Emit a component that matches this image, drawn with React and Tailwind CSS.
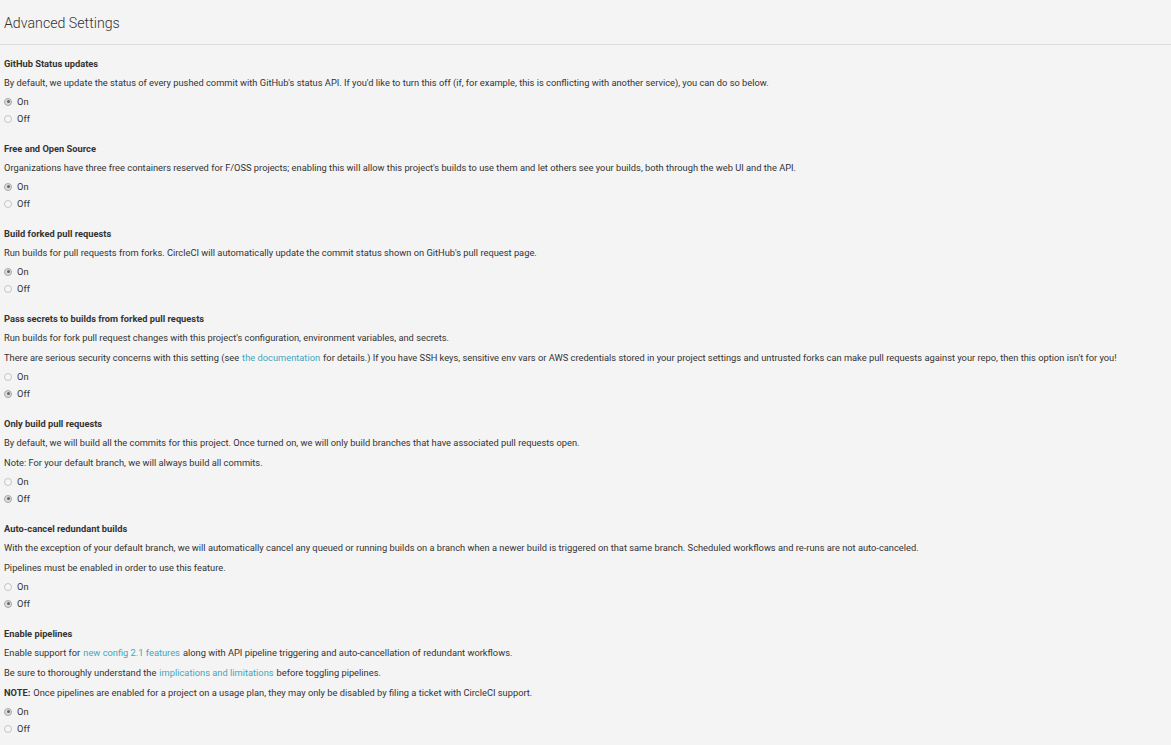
import React from "react";

function Radio({ checked, label }) {
  return (
    <label className="flex items-center h-[17px] gap-[5px]">
      <span
        className={
          checked
            ? "w-[8px] h-[8px] rounded-full border border-[#a8a8a8] bg-[#dcdcdc] flex items-center justify-center shrink-0"
            : "w-[8px] h-[8px] rounded-full border border-[#c4c4c4] bg-[#f6f6f6] flex items-center justify-center shrink-0"
        }
      >
        {checked && <span className="w-[3px] h-[3px] rounded-full bg-[#666]" />}
      </span>
      <span>{label}</span>
    </label>
  );
}

function Section({ title, children, on }) {
  return (
    <div className="mb-[12px]">
      <div className="font-bold h-[19px] flex items-center">{title}</div>
      {children}
      <div className="flex flex-col">
        <Radio checked={on} label="On" />
        <Radio checked={!on} label="Off" />
      </div>
    </div>
  );
}

function P({ children }) {
  return <p className="h-[20px] flex items-center whitespace-nowrap">{children}</p>;
}

function A({ children }) {
  return <a className="text-[#3fa7bd] mx-[3px]">{children}</a>;
}

export default function App() {
  return (
    <div
      className="min-h-[745px] bg-[#f4f4f4] text-[#333] text-[9.3px]"
      style={{ fontFamily: "Roboto, 'Liberation Sans', sans-serif" }}
    >
      <div className="h-[45px] flex items-center px-[4px] pt-[3px] border-b border-[#dedede]">
        <h1 className="text-[14.2px] font-light text-[#333]">Advanced Settings</h1>
      </div>
      <div className="px-[4px] pt-[9px]">
        <Section title="GitHub Status updates" on>
          <P>
            By default, we update the status of every pushed commit with GitHub's status API. If you'd like to turn this off (if, for example, this is conflicting with another service), you can do so below.
          </P>
        </Section>
        <Section title="Free and Open Source" on>
          <P>
            Organizations have three free containers reserved for F/OSS projects; enabling this will allow this project's builds to use them and let others see your builds, both through the web UI and the API.
          </P>
        </Section>
        <Section title="Build forked pull requests" on>
          <P>
            Run builds for pull requests from forks. CircleCI will automatically update the commit status shown on GitHub's pull request page.
          </P>
        </Section>
        <Section title="Pass secrets to builds from forked pull requests" on={false}>
          <P>Run builds for fork pull request changes with this project's configuration, environment variables, and secrets.</P>
          <P>
            There are serious security concerns with this setting (see<A>the documentation</A>for details.) If you have SSH keys, sensitive env vars or AWS credentials stored in your project settings and untrusted forks can make pull requests against your repo, then this option isn't for you!
          </P>
        </Section>
        <Section title="Only build pull requests" on={false}>
          <P>By default, we will build all the commits for this project. Once turned on, we will only build branches that have associated pull requests open.</P>
          <P>Note: For your default branch, we will always build all commits.</P>
        </Section>
        <Section title="Auto-cancel redundant builds" on={false}>
          <P>
            With the exception of your default branch, we will automatically cancel any queued or running builds on a branch when a newer build is triggered on that same branch. Scheduled workflows and re-runs are not auto-canceled.
          </P>
          <P>Pipelines must be enabled in order to use this feature.</P>
        </Section>
        <Section title="Enable pipelines" on>
          <P>
            Enable support for<A>new config 2.1 features</A>along with API pipeline triggering and auto-cancellation of redundant workflows.
          </P>
          <P>
            Be sure to thoroughly understand the<A>implications and limitations</A>before toggling pipelines.
          </P>
          <P>
            <b className="mr-[3px]">NOTE:</b>Once pipelines are enabled for a project on a usage plan, they may only be disabled by filing a ticket with CircleCI support.
          </P>
        </Section>
      </div>
    </div>
  );
}
